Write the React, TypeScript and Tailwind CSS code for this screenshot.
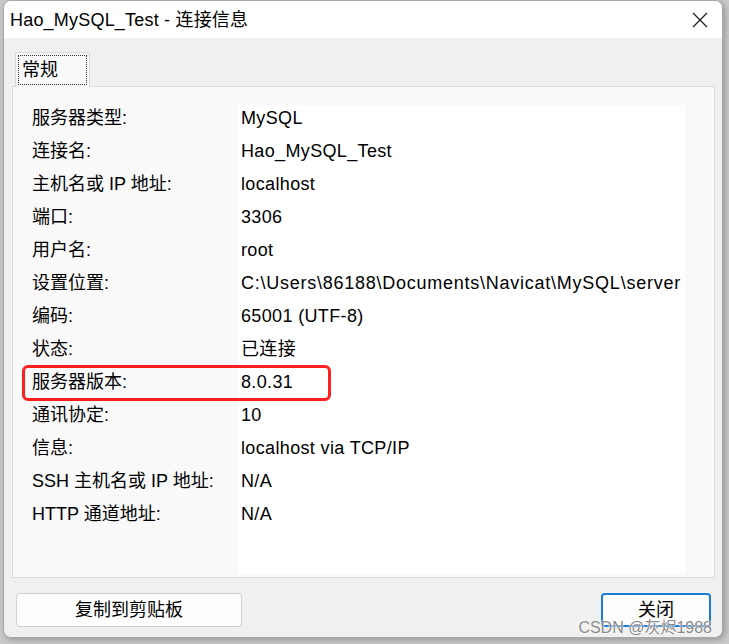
const ROWS: [string, string][] = [
  ['服务器类型:', 'MySQL'],
  ['连接名:', 'Hao_MySQL_Test'],
  ['主机名或 IP 地址:', 'localhost'],
  ['端口:', '3306'],
  ['用户名:', 'root'],
  ['设置位置:', 'C:\\Users\\86188\\Documents\\Navicat\\MySQL\\server'],
  ['编码:', '65001 (UTF-8)'],
  ['状态:', '已连接'],
  ['服务器版本:', '8.0.31'],
  ['通讯协定:', '10'],
  ['信息:', 'localhost via TCP/IP'],
  ['SSH 主机名或 IP 地址:', 'N/A'],
  ['HTTP 通道地址:', 'N/A'],
];

const FONT = "font-['Liberation_Sans','Noto_Sans_CJK_SC',sans-serif]";

const CloseIcon = () => (
  <svg width="16" height="16" viewBox="0 0 16 16" fill="none" stroke="#1a1a1a" strokeWidth="1.2">
    <path d="M1 1 L15 15 M15 1 L1 15" />
  </svg>
);

export default function App() {
  return (
    <div className={`w-[729px] h-[644px] bg-[#c9c9c9] overflow-hidden ${FONT} text-black`}>
      <div className="ml-[3px] w-[720px] h-[638px] rounded-lg bg-[#f0f0f0] border border-[#a8a8a8] overflow-hidden relative shadow-[2px_2px_6px_rgba(0,0,0,0.25)]">
        {/* Title bar */}
        <div className="h-[37px] bg-white flex items-center justify-between pl-[6px] pr-[14px]">
          <span className="text-[18px] leading-none tracking-[0.2px]">Hao_MySQL_Test - 连接信息</span>
          <CloseIcon />
        </div>

        <div className="px-[8px] pt-[14px]">
          {/* Tab */}
          <div className="ml-[3px] w-[75px] h-[35px] bg-[#f9f9f9] border border-b-0 border-[#d9d9d9] p-[2px] relative z-10 -mb-px">
            <div className="h-full border border-dotted border-[#333] flex items-start pl-[3px] pt-[1px]">
              <span className="text-[18px] leading-[26px]">常规</span>
            </div>
          </div>

          {/* Panel */}
          <div className="relative h-[492px] w-[703px] bg-[#f9f9f9] border border-[#dcdcdc] pt-[18px] pb-[3px] flex">
            <div className="w-[225px] pl-[19px] text-[18px]">
              {ROWS.map(([label]) => (
                <div key={label} className="h-[33px] leading-[26px] whitespace-nowrap">
                  {label}
                </div>
              ))}
            </div>
            <div className="w-[447px] bg-white pl-[3px] text-[18px] overflow-hidden">
              {ROWS.map(([label, value]) => (
                <div
                  key={label}
                  className={`h-[33px] leading-[26px] whitespace-nowrap ${
                    value.includes('\\') ? 'tracking-[0.75px]' : 'tracking-[0.35px]'
                  }`}
                >
                  {value}
                </div>
              ))}
            </div>

            {/* Annotation box */}
            <div className="absolute left-[9px] top-[278px] w-[309px] h-[36px] border-[3px] border-[#ff1f1f] rounded-[6px]" />
          </div>

          {/* Buttons */}
          <div className="flex justify-between mt-[15px] pl-[4px] pr-[3px]">
            <button className="w-[226px] h-[34px] rounded-[4px] border border-[#cfcfcf] bg-[#fdfdfd] text-[18px] leading-none">
              复制到剪贴板
            </button>
            <button className="w-[110px] h-[34px] rounded-[4px] border-2 border-[#1a7bd6] bg-[#fdfdfd] text-[18px] leading-none">
              关闭
            </button>
          </div>
        </div>

        {/* Watermark */}
        <div className="absolute right-[10px] bottom-[1px] text-[16px] leading-none text-[#8a8a8a] [text-shadow:0_0_2px_#fff,0_0_2px_#fff]">
          CSDN @灰烬1988
        </div>
      </div>
    </div>
  );
}
